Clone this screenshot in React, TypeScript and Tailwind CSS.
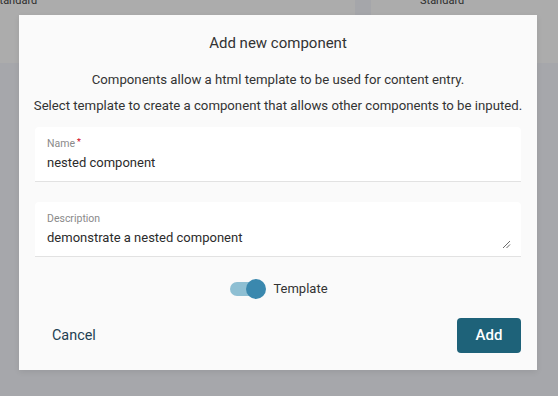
import React from "react";

const font = { fontFamily: "Roboto, 'Noto Sans', sans-serif" };

function Field({
  label,
  value,
  required,
  resizable,
}: {
  label: string;
  value: string;
  required?: boolean;
  resizable?: boolean;
}) {
  return (
    <div className="relative h-[55px] rounded-t-[4px] border-b border-[#e2e2e2] bg-white px-3 pt-[10px]">
      <div className="flex h-[14px] items-start text-[10.5px] leading-[14px] text-[#8a8a8a]">
        {label}
        {required && <span className="ml-[2px] text-[9px] leading-[10px] text-[#d0021b]">*</span>}
      </div>
      <div className="mt-[2px] h-[20px] text-[13px] leading-[20px] text-[#2b2b2b]">{value}</div>
      {resizable && (
        <svg className="absolute bottom-[7px] right-[10px]" width="9" height="9" viewBox="0 0 9 9">
          <path d="M1 8 L8 1 M4.5 8 L8 4.5" stroke="#6b6b6b" strokeWidth="1" />
        </svg>
      )}
    </div>
  );
}

export default function App() {
  return (
    <div className="relative h-[396px] w-[558px] overflow-hidden bg-[#a6a7ab]" style={font}>
      {/* page behind the overlay */}
      <div className="flex h-[63px]">
        <div className="relative w-[355px] bg-[#acacac]">
          <span className="absolute -top-[6px] -left-[7px] text-[11px] leading-[14px] text-[#2c2c2c]">Standard</span>
        </div>
        <div className="w-[16px] bg-[#a5a6aa]" />
        <div className="flex-1 bg-[#acacac] pl-[49px]">
          <span className="-mt-[6px] block h-[14px] text-[11px] leading-[14px] text-[#2c2c2c]">Standard</span>
        </div>
      </div>

      <div className="absolute left-[19px] top-[15px] w-[518px] bg-[#fafafa] px-4 pt-[18px] pb-[17px] shadow-[0_2px_6px_rgba(0,0,0,0.08)]">
        <h2 className="h-[20px] text-center text-[15px] leading-[20px] text-[#333]">Add new component</h2>
        <p className="mt-[17px] h-[20px] whitespace-nowrap text-center text-[13.2px] leading-[20px] text-[#333]">
          Components allow a html template to be used for content entry.
        </p>
        <p className="-mx-4 mt-[6px] h-[20px] whitespace-nowrap text-center text-[13.2px] leading-[20px] text-[#333]">
          Select template to create a component that allows other components to be inputed.
        </p>

        <div className="mt-[11px]">
          <Field label="Name" value="nested component" required />
        </div>
        <div className="mt-[20px]">
          <Field label="Description" value="demonstrate a nested component" resizable />
        </div>

        <div className="mt-[22px] flex h-[20px] items-center justify-center">
          <div className="relative ml-[2px] h-[20px] w-[36px]">
            <div className="absolute left-0 top-[3px] h-[14px] w-[32px] rounded-full bg-[#8ebfd3]" />
            <div className="absolute right-0 top-0 h-[20px] w-[20px] rounded-full bg-[#3a88ae]" />
          </div>
          <span className="ml-[7px] text-[13px] text-[#333]">Template</span>
        </div>

        <div className="mt-[19px] flex items-center justify-between">
          <button className="ml-[17px] text-[14.4px] text-[#233f52]">Cancel</button>
          <button className="h-[35px] w-[64px] rounded-[4px] bg-[#1e6279] text-[15px] font-medium text-white">
            Add
          </button>
        </div>
      </div>
    </div>
  );
}
